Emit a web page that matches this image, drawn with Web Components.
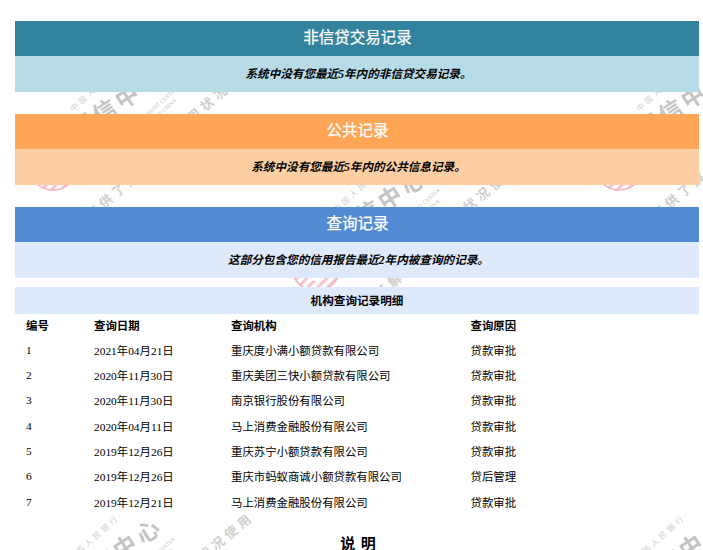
<!DOCTYPE html>
<html><head><meta charset="utf-8">
<style>
html,body{margin:0;padding:0;background:#fff;overflow:hidden;height:550px}
body{position:relative;font-family:"Liberation Serif","Noto Sans CJK SC",serif}
</style></head><body>
<credit-watermark></credit-watermark>
<credit-report>
<credit-section title-text="非信贷交易记录" head="#33839e" body="#b7dce8">系统中没有您最近5年内的非信贷交易记录。</credit-section>
<credit-section title-text="公共记录" head="#ffa556" body="#ffcea2">系统中没有您最近5年内的公共信息记录。</credit-section>
<credit-section title-text="查询记录" head="#528bd4" body="#dee9fb">这部分包含您的信用报告最近2年内被查询的记录。</credit-section>
<query-table></query-table>
<note-title>说 明</note-title>
</credit-report>
<script>
function def(name,html,init){customElements.define(name,class extends HTMLElement{constructor(){super();this.attachShadow({mode:'open'}).innerHTML=html;}connectedCallback(){init&&init(this);}});}
def('credit-report',`<style>:host{display:flex;flex-direction:column;position:relative;z-index:1;padding:21px 4px 0 15px;gap:22px}</style><slot></slot>`);
def('credit-section',`<style>:host{display:block}
.h{height:35px;box-sizing:border-box;padding:0 0 5px 1px;display:flex;align-items:center;justify-content:center;color:#fff;font:15.5px "Noto Sans CJK SC",sans-serif;-webkit-text-stroke:.25px #fff}
.b{height:36px;box-sizing:border-box;padding:0 0 2px 3px;display:flex;align-items:center;justify-content:center;font:italic bold 11.6px "Liberation Serif","Noto Sans CJK SC",serif;color:#000}
</style><div class="h"></div><div class="b"><slot></slot></div>`,el=>{const s=el.shadowRoot;const h=s.querySelector('.h');h.textContent=el.getAttribute('title-text');h.style.background=el.getAttribute('head');s.querySelector('.b').style.background=el.getAttribute('body');});
const rows=[["1","2021年04月21日","重庆度小满小额贷款有限公司","贷款审批"],["2","2020年11月30日","重庆美团三快小额贷款有限公司","贷款审批"],["3","2020年11月30日","南京银行股份有限公司","贷款审批"],["4","2020年04月11日","马上消费金融股份有限公司","贷款审批"],["5","2019年12月26日","重庆苏宁小额贷款有限公司","贷款审批"],["6","2019年12月26日","重庆市蚂蚁商诚小额贷款有限公司","贷后管理"],["7","2019年12月21日","马上消费金融股份有限公司","贷款审批"]];
def('query-table',`<style>:host{display:block;margin-top:-13px;font:11.4px "Liberation Serif","Noto Sans CJK SC",serif;color:#000}
.t{height:27px;box-sizing:border-box;padding-bottom:2px;background:#dee9fb;display:flex;align-items:center;justify-content:center;font-weight:bold;font-size:11.6px}
.l{background:#fff}
.r{display:grid;box-sizing:border-box;padding-bottom:2px;grid-template-columns:68px 137px 239.5px 1fr;padding-left:11px;height:25.35px;align-items:center}
.r.hd{font-weight:bold;height:24px}
</style><div class="t">机构查询记录明细</div><div class="l"><div class="r hd"><span>编号</span><span>查询日期</span><span>查询机构</span><span>查询原因</span></div>`+rows.map(r=>`<div class="r">${r.map(c=>`<span>${c}</span>`).join('')}</div>`).join('')+`</div>`);
def('note-title',`<style>:host{display:block;text-align:center;font:bold 15px/14px "Noto Sans CJK SC",sans-serif;margin-top:-1px;letter-spacing:1px;padding-left:3px}</style><slot></slot>`);
def('wm-stamp',`<style>:host{position:absolute;width:1px;height:1px}
svg{position:absolute;left:0;top:0;overflow:visible}
text{font-family:"Noto Sans CJK SC",sans-serif;fill:#c9c9c9}
.big{font-size:23px;font-weight:bold;fill:#c4c4c4}
.mid{font-size:13px;font-weight:bold;fill:#cfcfcf}
.sm{font-size:8px;fill:#cfcfcf}
.en{font:5.5px "Liberation Serif",serif;fill:#c4c4c4}
</style><svg width="1" height="1">
<defs><pattern id="h" width="7" height="7" patternUnits="userSpaceOnUse" patternTransform="rotate(45)"><rect width="3.2" height="7" fill="#f6c6cf"/></pattern></defs>
<g transform="translate(-74,69)"><circle r="25" fill="url(#h)"/><circle r="24" fill="none" stroke="#f0b4c0" stroke-width="1.6"/><circle r="14" fill="#fff"/></g>
<g transform="translate(-27,-9) rotate(-42)"><text class="sm" x="-36 -25 -14 -3 8 19 30" y="0">中国人民银行一</text></g>
<g transform="rotate(-33)"><text class="big" x="-65 -38 -11.5 16" y="8">征信中心</text></g>
<g transform="translate(36,8) rotate(-42)"><text class="en" text-anchor="middle" y="-2">CREDIT CENTER</text><text class="en" text-anchor="middle" y="6">OF CHINA</text></g>
<g transform="translate(100,-10) rotate(-40)"><text class="mid" x="-50 -33 -16 1 18" y="5">用状况使用</text></g>
<g transform="translate(-12,96) rotate(-40)"><text class="mid" x="-36 -19 -2 15" y="5">仅供了解</text></g>
</svg>`,el=>{el.style.left=el.getAttribute('x')+'px';el.style.top=el.getAttribute('y')+'px';});
def('credit-watermark',`<style>:host{position:absolute;inset:0;overflow:hidden;z-index:0;display:block}</style>
<wm-stamp x="127" y="97"></wm-stamp><wm-stamp x="693" y="97"></wm-stamp><wm-stamp x="390" y="198"></wm-stamp><wm-stamp x="125" y="547"></wm-stamp><wm-stamp x="691" y="547"></wm-stamp>`);
</script>
</body></html>
